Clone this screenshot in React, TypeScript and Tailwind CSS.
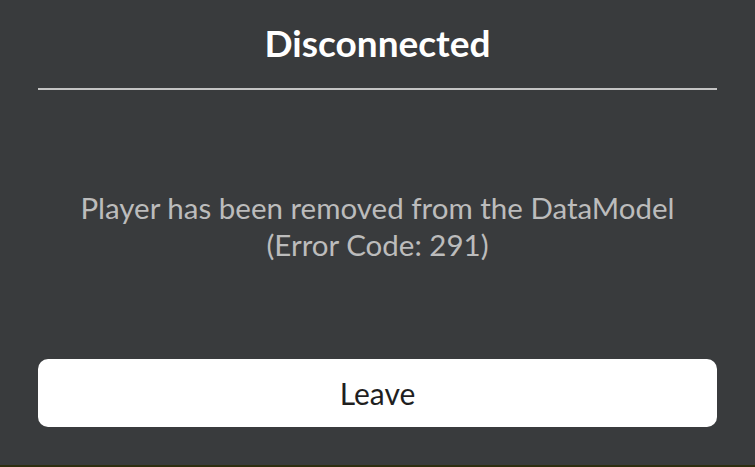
const App = () => {
  return (
    <div
      className="w-[755px] h-[467px] bg-[#393b3d] flex flex-col overflow-hidden"
      style={{ fontFamily: "Lato, 'Open Sans', sans-serif" }}
    >
      <div className="h-[88px] flex items-center justify-center pb-[4px]">
        <h1 className="text-[37px] font-bold text-white leading-none">Disconnected</h1>
      </div>
      <div className="mx-[38px] h-[2px] bg-[#c4c4c4]" />
      <div className="flex-1 flex flex-col items-center justify-center text-center text-[#bcbcbc] text-[29.5px] leading-[37px] pt-[2px]">
        <p>Player has been removed from the DataModel</p>
        <p>(Error Code: 291)</p>
      </div>
      <div className="px-[38px] pb-[38px]">
        <button className="w-full h-[68px] rounded-[10px] bg-white text-[#1f1f1f] text-[30px]">
          Leave
        </button>
      </div>
      <div className="h-[2px] bg-[#2e2e10]" />
    </div>
  );
};

export default App;
